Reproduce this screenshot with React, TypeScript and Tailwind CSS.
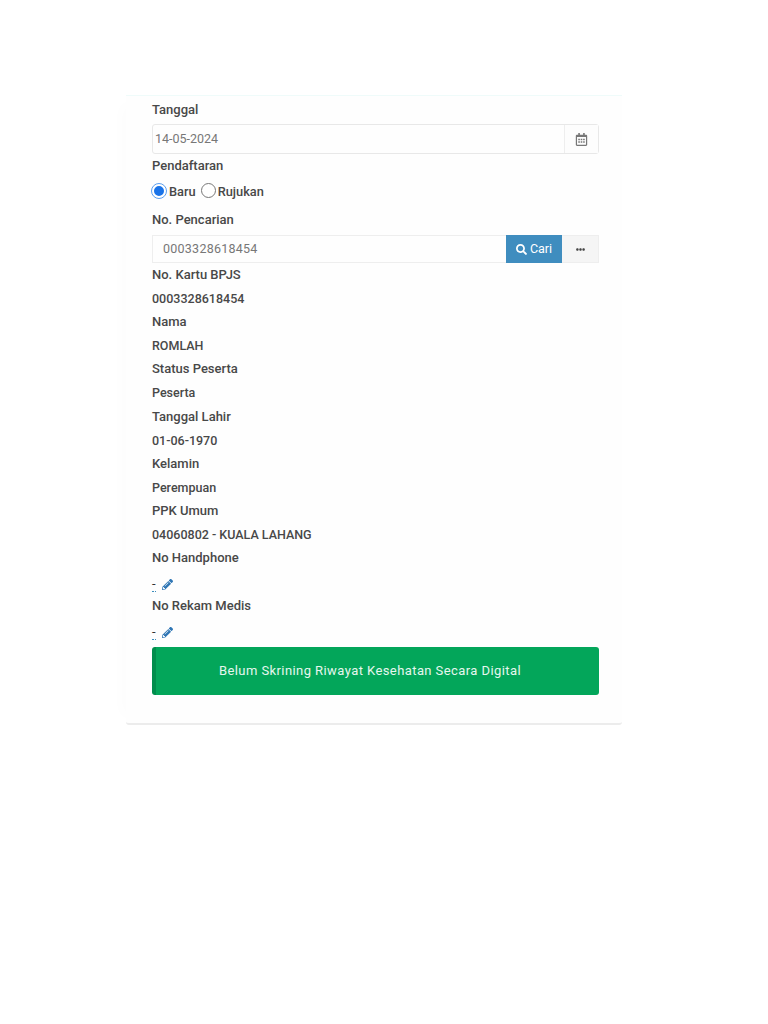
import { FaRegCalendarAlt, FaSearch, FaEllipsisH, FaPencilAlt } from 'react-icons/fa';

const fields = [
  { label: 'No. Kartu BPJS', value: '0003328618454' },
  { label: 'Nama', value: 'ROMLAH' },
  { label: 'Status Peserta', value: 'Peserta' },
  { label: 'Tanggal Lahir', value: '01-06-1970' },
  { label: 'Kelamin', value: 'Perempuan' },
  { label: 'PPK Umum', value: '04060802 - KUALA LAHANG' },
];

function Label({ children }: { children: React.ReactNode }) {
  return <div className="h-[24px] leading-[24px] text-[13px] font-medium text-[#484848]">{children}</div>;
}

function EditableValue() {
  return (
    <div className="h-[24px] pt-[4px] flex items-center gap-[6px] text-[13px] text-[#333] leading-none">
      <span className="border-b border-dotted border-[#3c8dbc] pb-[1px]">-</span>
      <FaPencilAlt size={11} className="text-[#2f76b5]" />
    </div>
  );
}

export default function App() {
  return (
    <div className="min-h-[1024px] bg-white pt-[95px] pl-[126px] font-['Roboto',sans-serif]">
      <div className="w-[496px] h-[630px] pl-[26px] pr-[23px] pt-[2px] bg-[#fefefe] border-t border-[#effbfa] border-b-2 border-b-[#ececec] rounded-b-[3px] shadow-[-14px_0_14px_-10px_rgba(0,0,0,0.015)]">
        <Label>Tanggal</Label>
        <div className="mt-[2px] h-[30px] flex border border-[#e8e8e8] rounded-[3px]">
          <div className="flex-1 flex items-center pl-[2px] text-[12.5px] text-[#777]">14-05-2024</div>
          <div className="w-[34px] flex items-center justify-center border-l border-[#eeeeee] bg-[#fdfdfd]">
            <FaRegCalendarAlt size={13} className="text-[#777]" />
          </div>
        </div>
        <Label>Pendaftaran</Label>
        <div className="h-[28px] flex items-center text-[12.8px] font-medium text-[#484848]">
          <span className="w-[14px] h-[14px] rounded-full border-2 border-white bg-[#1a73e8] outline outline-1 outline-[#5c9ff0] mr-[3px] -mt-[3px]" />
          <span>Baru</span>
          <span className="w-[15px] h-[15px] rounded-full border border-[#777] bg-white ml-[5px] mr-[2px] -mt-[4px]" />
          <span>Rujukan</span>
        </div>
        <div className="mt-[2px]"><Label>No. Pencarian</Label></div>
        <div className="mt-[3px] h-[28px] flex">
          <div className="flex-1 flex items-center pl-[10px] border border-r-0 border-[#eeeeee] text-[12.5px] tracking-[0.25px] text-[#777]">0003328618454</div>
          <div className="w-[56px] flex items-center justify-center gap-[3px] bg-[#3f8dbf] text-[12.5px] text-white">
            <FaSearch size={11} />
            Cari
          </div>
          <div className="w-[37px] flex items-center justify-center bg-[#f5f5f5] border border-l-0 border-[#eeeeee] text-[#444]">
            <FaEllipsisH size={9} />
          </div>
        </div>
        {fields.map((f) => (
          <div key={f.label}>
            <Label>{f.label}</Label>
            <div className="h-[23.2px] leading-[23px] text-[12.5px] font-medium text-[#484848]">{f.value}</div>
          </div>
        ))}
        <Label>No Handphone</Label>
        <EditableValue />
        <Label>No Rekam Medis</Label>
        <EditableValue />
        <div className="mt-[5px] h-[48px] flex items-center justify-center bg-[#03a65a] border-l-[4px] border-[#008d4c] rounded-[3px] text-[13px] text-[#e6f6ee] tracking-[0.42px] pr-[15px]">
          Belum Skrining Riwayat Kesehatan Secara Digital
        </div>
      </div>
    </div>
  );
}
